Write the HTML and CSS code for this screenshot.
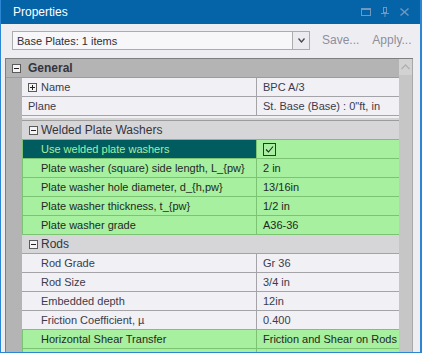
FILE: index.html
```html
<!DOCTYPE html>
<html>
<head>
  <meta charset="utf-8">
  <title>Properties</title>
  <link rel="stylesheet" href="styles.css">
</head>
<body>
  <div class="window">
    <div class="titlebar">
      <span class="title">Properties</span>
      <div class="title-icons">
        <svg class="ico-max" width="10" height="8" viewBox="0 0 10 8"><rect x="0.5" y="0.5" width="9" height="7" fill="none" stroke="#6f97bf"/><line x1="0" y1="1.5" x2="10" y2="1.5" stroke="#6f97bf"/></svg>
        <svg class="ico-pin" width="8" height="10" viewBox="0 0 8 10"><rect x="2.5" y="0.5" width="3" height="5" fill="none" stroke="#6f97bf"/><line x1="0" y1="6.5" x2="8" y2="6.5" stroke="#6f97bf"/><line x1="4" y1="7" x2="4" y2="10" stroke="#6f97bf"/></svg>
        <svg class="ico-close" width="9" height="8" viewBox="0 0 9 8"><path d="M0.5 0.5 L8.5 7.5 M8.5 0.5 L0.5 7.5" stroke="#6f97bf" stroke-width="1.4"/></svg>
      </div>
    </div>

    <div class="toolbar">
      <div class="combo">
        <span class="combo-text">Base Plates: 1 items</span>
        <div class="combo-btn">
          <svg width="7" height="5" viewBox="0 0 7 5"><path d="M0.5 0.5 L3.5 4 L6.5 0.5" fill="none" stroke="#4a4a4a" stroke-width="1.3"/></svg>
        </div>
      </div>
      <span class="tool-btn">Save...</span>
      <span class="tool-btn apply">Apply...</span>
    </div>

    <div class="grid-wrap">
      <div class="grid">
        <div class="rows">
          <div class="cat-main">
            <svg class="box" width="9" height="9" viewBox="0 0 9 9"><rect x="0.5" y="0.5" width="8" height="8" fill="#f4f4f4" stroke="#5a5a5a"/><line x1="2" y1="4.5" x2="7" y2="4.5" stroke="#222"/></svg>
            <span>General</span>
          </div>

          <div class="row">
            <div class="gutter"></div>
            <div class="name name-box">
              <svg class="box" width="9" height="9" viewBox="0 0 9 9"><rect x="0.5" y="0.5" width="8" height="8" fill="#f4f4f4" stroke="#5a5a5a"/><line x1="2" y1="4.5" x2="7" y2="4.5" stroke="#222"/><line x1="4.5" y1="2" x2="4.5" y2="7" stroke="#222"/></svg>
              <span>Name</span>
            </div>
            <div class="value">BPC A/3</div>
          </div>
          <div class="row">
            <div class="gutter"></div>
            <div class="name top-level">Plane</div>
            <div class="value">St. Base (Base) : 0"ft, in</div>
          </div>
          <div class="row spacer">
            <div class="gutter"></div>
            <div class="spacer-cell"></div>
          </div>

          <div class="row">
            <div class="gutter"></div>
            <div class="cat">
              <svg class="box" width="9" height="9" viewBox="0 0 9 9"><rect x="0.5" y="0.5" width="8" height="8" fill="#f4f4f4" stroke="#5a5a5a"/><line x1="2" y1="4.5" x2="7" y2="4.5" stroke="#222"/></svg>
              <span>Welded Plate Washers</span>
            </div>
          </div>
          <div class="row hl">
            <div class="gutter"></div>
            <div class="name sel">Use welded plate washers</div>
            <div class="value">
              <svg class="check" width="13" height="13" viewBox="0 0 13 13"><rect x="0.5" y="0.5" width="12" height="12" fill="none" stroke="#333"/><path d="M3 6.5 L5.5 9 L10 3.5" fill="none" stroke="#222" stroke-width="1.1"/></svg>
            </div>
          </div>
          <div class="row hl">
            <div class="gutter"></div>
            <div class="name">Plate washer (square) side length, L_{pw}</div>
            <div class="value">2 in</div>
          </div>
          <div class="row hl">
            <div class="gutter"></div>
            <div class="name">Plate washer hole diameter, d_{h,pw}</div>
            <div class="value">13/16in</div>
          </div>
          <div class="row hl">
            <div class="gutter"></div>
            <div class="name">Plate washer thickness, t_{pw}</div>
            <div class="value">1/2 in</div>
          </div>
          <div class="row hl">
            <div class="gutter"></div>
            <div class="name">Plate washer grade</div>
            <div class="value">A36-36</div>
          </div>

          <div class="row">
            <div class="gutter"></div>
            <div class="cat">
              <svg class="box" width="9" height="9" viewBox="0 0 9 9"><rect x="0.5" y="0.5" width="8" height="8" fill="#f4f4f4" stroke="#5a5a5a"/><line x1="2" y1="4.5" x2="7" y2="4.5" stroke="#222"/></svg>
              <span>Rods</span>
            </div>
          </div>
          <div class="row">
            <div class="gutter"></div>
            <div class="name">Rod Grade</div>
            <div class="value">Gr 36</div>
          </div>
          <div class="row">
            <div class="gutter"></div>
            <div class="name">Rod Size</div>
            <div class="value">3/4 in</div>
          </div>
          <div class="row">
            <div class="gutter"></div>
            <div class="name">Embedded depth</div>
            <div class="value">12in</div>
          </div>
          <div class="row">
            <div class="gutter"></div>
            <div class="name">Friction Coefficient, &micro;</div>
            <div class="value">0.400</div>
          </div>
          <div class="row hl">
            <div class="gutter"></div>
            <div class="name">Horizontal Shear Transfer</div>
            <div class="value">Friction and Shear on Rods</div>
          </div>
          <div class="row hl">
            <div class="gutter"></div>
            <div class="name"></div>
            <div class="value"></div>
          </div>
        </div>

        <div class="scrollbar">
          <div class="scroll-up">
            <svg width="9" height="6" viewBox="0 0 9 6"><path d="M0.5 5 L4.5 1 L8.5 5" fill="none" stroke="#b0b0b0" stroke-width="1.4"/></svg>
          </div>
        </div>
      </div>
    </div>
  </div>
</body>
</html>
```

FILE: styles.css
```css
body {
  margin: 0;
  font-family: "Liberation Sans", Arial, sans-serif;
  font-size: 11px;
  color: #3b3b4b;
}

.window {
  width: 422px;
  height: 353px;
  box-sizing: border-box;
  border: 1px solid #2c86d4;
  border-top: 0;
  border-right-width: 2px;
  background: #eeeef2;
  display: flex;
  flex-direction: column;
  overflow: hidden;
}

.titlebar {
  height: 24px;
  flex-shrink: 0;
  background: #0563a8;
  color: #fff;
  display: flex;
  align-items: center;
  padding-left: 12px;
  font-size: 12px;
}

.title-icons {
  margin-left: auto;
  display: flex;
  align-items: center;
  padding-right: 11px;
}

.ico-pin {
  margin-left: 10px;
}

.ico-close {
  margin-left: 11px;
}

.toolbar {
  height: 34px;
  flex-shrink: 0;
  box-sizing: border-box;
  padding: 7px 0 0 11px;
  display: flex;
  align-items: flex-start;
}

.combo {
  width: 298px;
  height: 19px;
  box-sizing: border-box;
  border: 1px solid #acacac;
  background: #f7f7f9;
  display: flex;
  align-items: center;
  color: #2e2e3a;
}

.combo-text {
  padding-left: 4px;
}

.combo-btn {
  margin-left: auto;
  width: 16px;
  height: 100%;
  border-left: 1px solid #acacac;
  background: #ececf0;
  display: flex;
  align-items: center;
  justify-content: center;
}

.tool-btn {
  margin-left: 12px;
  line-height: 19px;
  color: #8e8e9c;
  font-size: 12px;
}

.tool-btn.apply {
  margin-left: 13px;
}

.grid-wrap {
  flex: 1;
  display: flex;
  padding-left: 4px;
  min-height: 0;
}

.grid {
  display: flex;
  border-left: 1px solid #7e7e7e;
  border-top: 1px solid #7e7e7e;
  overflow: hidden;
}

.rows {
  width: 393px;
  background: #b4b4b4;
}

.cat-main {
  height: 18px;
  border-bottom: 1px solid #9c9c9c;
  background: #b4b4b4;
  display: flex;
  align-items: center;
  padding-left: 6px;
  font-size: 12px;
  font-weight: bold;
  color: #34343e;
}

.cat-main .box {
  margin-right: 7px;
}

.row {
  display: flex;
  height: 19px;
}

.gutter {
  width: 16px;
  flex-shrink: 0;
  background: #b4b4b4;
}

.name,
.value {
  box-sizing: border-box;
  height: 19px;
  line-height: 18px;
  border-bottom: 1px solid #a4a4a8;
  background: #f0f0f5;
  white-space: nowrap;
  overflow: hidden;
}

.name {
  width: 235px;
  border-right: 1px solid #a4a4a8;
  padding-left: 19px;
}

.name.top-level {
  padding-left: 6px;
}

.name-box {
  display: flex;
  align-items: center;
  padding-left: 6px;
}

.name-box .box {
  margin-right: 4px;
}

.value {
  flex: 1;
  padding-left: 6px;
}

.spacer {
  height: 5px;
}

.spacer-cell {
  flex: 1;
  box-sizing: border-box;
  border-top: 2px solid #f0f0f5;
  border-bottom: 1px solid #9c9c9c;
  background: #d4d4d4;
}

.cat {
  flex: 1;
  box-sizing: border-box;
  height: 19px;
  border-bottom: 1px solid #a4a4a8;
  background: #d6d6d8;
  display: flex;
  align-items: center;
  padding-left: 7px;
  font-size: 12px;
  color: #34343e;
}

.cat .box {
  margin-right: 3px;
}

.row.hl .name,
.row.hl .value {
  background: #a6f0a0;
  border-color: #7cc474;
  color: #1f2a1f;
}

.row.hl .name {
  box-shadow: inset 1px 0 #7cc474;
}

.row.hl .name.sel {
  background: #005c5e;
  color: #a6f0a0;
}

.check {
  vertical-align: middle;
  margin-top: -2px;
}

.scrollbar {
  width: 13px;
  background: #c6c6c6;
  border-right: 1px solid #a8a8a8;
}

.scroll-up {
  height: 16px;
  background: #d2d2d2;
  display: flex;
  align-items: center;
  justify-content: center;
}
```
